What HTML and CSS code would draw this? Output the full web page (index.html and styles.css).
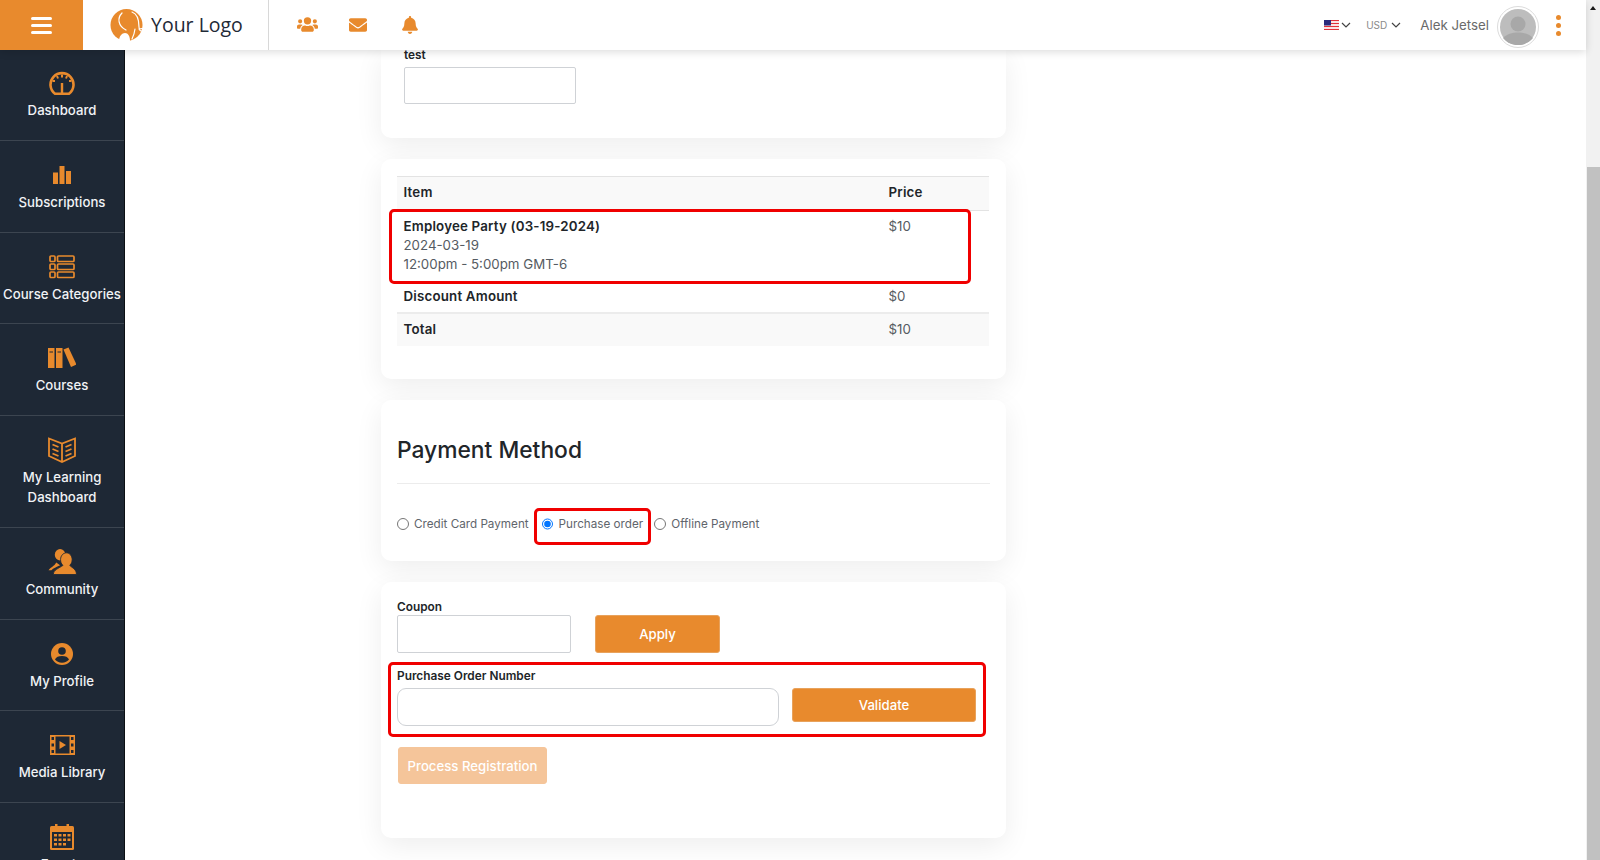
FILE: index.html
```html
<!DOCTYPE html>
<html lang="en">
<head>
<meta charset="utf-8">
<title>Checkout</title>
<link rel="stylesheet" href="styles.css">
</head>
<body>
<div class="app">
  <div class="page">
    <header class="topbar">
      <button class="burger" aria-label="Menu"><span></span><span></span><span></span></button>
      <div class="brand">
        <svg class="brand-mark" viewBox="0 0 36 34" width="36" height="34">
          <circle cx="16.5" cy="17" r="16" fill="#e88a2d"/>
          <path d="M12 5C7 10 8 18 16 22M22 4c6 2 7 9 7 15 0 4 2 5 6 3M25 21c-.5 4-1.500 7-3 10M29 21l6-1" fill="none" stroke="#fff" stroke-width="1.200" stroke-linecap="round"/>
          <path d="M9 33c0-5 3-8 6-8s5 3 5 8z" fill="#fff"/>
        </svg>
        <span class="brand-name">Your Logo</span>
      </div>
      <nav class="quick">
        <svg viewBox="0 0 640 512" width="21" height="17" fill="#e88a2d"><path d="M96 224a64 64 0 1 0 0-128 64 64 0 0 0 0 128zm448 0a64 64 0 1 0 0-128 64 64 0 0 0 0 128zm32 32h-64c-17.600 0-33.500 7.100-45.100 18.600 40.300 22.100 68.900 62 75.100 109.400h66c17.700 0 32-14.300 32-32v-32c0-35.300-28.700-64-64-64zm-256 0a112 112 0 1 0 0-224 112 112 0 0 0 0 224zm76.800 32h-8.300c-20.800 10-43.900 16-68.500 16s-47.600-6-68.500-16h-8.300C179.600 288 128 339.600 128 403.200V432c0 26.500 21.500 48 48 48h288c26.500 0 48-21.500 48-48v-28.800c0-63.600-51.600-115.200-115.200-115.200zm-223.700-13.400C161.500 263.100 145.600 256 128 256H64c-35.300 0-64 28.700-64 64v32c0 17.700 14.300 32 32 32h65.900c6.300-47.400 34.900-87.300 75.200-109.400z"/></svg>
        <svg viewBox="0 0 512 512" width="18" height="18" fill="#e88a2d"><path d="M502.300 190.800c3.900-3.100 9.700-.2 9.700 4.700V400c0 26.500-21.500 48-48 48H48c-26.500 0-48-21.500-48-48V195.600c0-5 5.700-7.800 9.700-4.700 22.400 17.400 52.100 39.500 154.100 113.600 21.100 15.400 56.700 47.800 92.200 47.600 35.700.3 72-32.800 92.300-47.600 102-74.100 131.600-96.300 154-113.700zM256 320c23.200.4 56.600-29.200 73.400-41.400 132.700-96.300 142.800-104.700 173.400-128.700 5.800-4.500 9.200-11.500 9.200-18.900v-19c0-26.500-21.500-48-48-48H48C21.500 64 0 85.500 0 112v19c0 7.400 3.400 14.300 9.200 18.900 30.600 23.900 40.700 32.400 173.400 128.700 16.800 12.200 50.200 41.800 73.400 41.400z"/></svg>
        <svg class="bell" viewBox="0 0 448 512" width="16" height="18" fill="#e88a2d"><path d="M224 512c35.300 0 64-28.700 64-64H160c0 35.300 28.700 64 64 64zm215.400-149.700c-19.300-20.800-55.500-52-55.500-154.300 0-77.700-54.500-139.900-127.900-155.200V32c0-17.700-14.300-32-32-32s-32 14.300-32 32v20.800C118.600 68.100 64.100 130.300 64.100 208c0 102.300-36.200 133.500-55.500 154.300-6 6.400-8.700 14.100-8.600 21.700.1 16.400 13 32 32.100 32h383.800c19.100 0 32-15.600 32.100-32 .1-7.600-2.600-15.300-8.600-21.700z"/></svg>
      </nav>
      <div class="account">
        <span class="pick lang">
          <svg class="flag" viewBox="0 0 15 10" width="15" height="10"><rect width="15" height="10" fill="#fff"/><path d="M0 .5h15M0 3.500h15M0 6.500h15M0 9.500h15" stroke="#e0303a" stroke-width="1"/><path d="M0 2h15M0 5h15M0 8h15" stroke="#f3c6c8" stroke-width="1"/><rect width="7" height="5.500" fill="#2a2a7c"/></svg>
          <svg class="chev" viewBox="0 0 10 6" width="10" height="6"><path d="M1 1l4 4 4-4" fill="none" stroke="#444" stroke-width="1.200"/></svg>
        </span>
        <span class="pick currency">USD
          <svg class="chev" viewBox="0 0 10 6" width="10" height="6"><path d="M1 1l4 4 4-4" fill="none" stroke="#444" stroke-width="1.200"/></svg>
        </span>
        <span class="user-name">Alek Jetsel</span>
        <span class="avatar">
          <svg viewBox="0 0 36 36" width="36" height="36"><circle cx="18" cy="18" r="18" fill="#bdbdbd"/><circle cx="18" cy="15" r="7.500" fill="#a8a8a8"/><path d="M3 29c4-4 9-5.500 15-5.500S29 25 33 29c-3.500 4.500-9 7-15 7S6.500 33.500 3 29z" fill="#a8a8a8"/></svg>
        </span>
        <span class="dots"><i></i><i></i><i></i></span>
      </div>
    </header>

    <div class="workspace">
      <aside class="sidebar">
        <a class="side-item">
          <svg viewBox="0 0 26 24" width="26" height="24" fill="none" stroke="#e88a2d" stroke-width="2.600"><path d="M6 22.700A11.500 11.500 0 1 1 20 22.700z"/><path d="M13 12v10" stroke-width="2.400"/><path d="M13 3.500v3M8 5l1 2.500M18 5l-1 2.500M3.500 10H6M20 10h2.500" stroke-width="2"/></svg>
          <span>Dashboard</span>
        </a>
        <a class="side-item">
          <svg viewBox="0 0 18 18" width="18" height="24" fill="#e88a2d"><rect x="0" y="6.500" width="5" height="11.500"/><rect x="6.500" y="0" width="5" height="18"/><rect x="13" y="5" width="5" height="13"/></svg>
          <span>Subscriptions</span>
        </a>
        <a class="side-item">
          <svg viewBox="0 0 26 24" width="28" height="24" fill="none" stroke="#e88a2d" stroke-width="1.700"><rect x="1" y="1" width="5" height="5.500" rx="1"/><rect x="8.500" y="1" width="16.500" height="5.500" rx="1"/><rect x="1" y="9" width="5" height="5.500" rx="1"/><rect x="8.500" y="9" width="16.500" height="5.500" rx="1"/><rect x="1" y="17" width="5" height="5.500" rx="1"/><rect x="8.500" y="17" width="16.500" height="5.500" rx="1"/></svg>
          <span>Course Categories</span>
        </a>
        <a class="side-item">
          <svg viewBox="0 0 28 20" width="28" height="24" fill="#e88a2d"><rect x="0" y="0" width="6.500" height="20"/><rect x="8" y="0" width="6.500" height="20"/><path d="M15.500 1.500l5-2 8 17-5.500 2.500z"/><path d="M1.500 4h3.500M9.500 4H13" stroke="#1e2835" stroke-width="1"/></svg>
          <span>Courses</span>
        </a>
        <a class="side-item">
          <svg class="tall" viewBox="0 0 28 26" width="28" height="26" fill="none" stroke="#e88a2d" stroke-width="1.800"><path d="M1 1.500l13 5 13-5V19l-13 6-13-6zM14 6.500V25"/><path d="M4.500 7.500l6 2.500M4.500 12l6 2.500M4.500 16.500l6 2.500M23.500 7.500l-6 2.500M23.500 12l-6 2.500M23.500 16.500l-6 2.500"/></svg>
          <span>My Learning<br>Dashboard</span>
        </a>
        <a class="side-item">
          <svg class="tall" viewBox="0 0 29 27" width="29" height="27" fill="#e88a2d"><ellipse cx="12" cy="6" rx="5.500" ry="6"/><path d="M0 22c2-3 6-4 8-8l4 3c-4 2-7 3-9 5z"/><path d="M5 26.500c0-5 6-6.500 10-9.500-2-1.500-2.500-4-2.500-6 0-4 2.700-7 6-7s6 3 6 7c0 2-.5 4.500-2.500 6 3 3 7 4 7 9.500z" stroke="#1e2835" stroke-width=".9"/></svg>
          <span>Community</span>
        </a>
        <a class="side-item">
          <svg viewBox="0 0 22 22" width="22" height="24"><circle cx="11" cy="11" r="11" fill="#e88a2d"/><circle cx="11" cy="8" r="3.800" fill="#1e2835"/><path d="M4 16.500c1-2.500 3.500-3.500 7-3.500s6 1 7 3.500c-1.500 2-4 3.200-7 3.200s-5.500-1.200-7-3.200z" fill="#1e2835"/></svg>
          <span>My Profile</span>
        </a>
        <a class="side-item">
          <svg viewBox="0 0 25 20" width="25" height="24"><rect width="25" height="20" fill="#e88a2d"/><rect x="5.500" y="1.500" width="14" height="17" fill="#1e2835"/><path d="M9.500 6l6.500 4-6.500 4z" fill="#e88a2d"/><path d="M1.500 2h2.500v3H1.500zM1.500 8.500h2.500v3H1.500zM1.500 15h2.500v3H1.500zM21 2h2.500v3H21zM21 8.500h2.500v3H21zM21 15h2.500v3H21z" fill="#1e2835"/></svg>
          <span>Media Library</span>
        </a>
        <a class="side-item">
          <svg class="tall" viewBox="0 0 24 26" width="24" height="26"><rect y="2" width="24" height="24" rx="1.500" fill="#e88a2d"/><rect x="5" y="0" width="2.500" height="4" fill="#e88a2d"/><rect x="16.500" y="0" width="2.500" height="4" fill="#e88a2d"/><rect x="2" y="8" width="20" height="16" fill="#1e2835"/><path d="M4 10h3v2.500H4zM8.500 10h3v2.500h-3zM13 10h3v2.500h-3zM17.500 10h3v2.500h-3zM4 14.500h3V17H4zM8.500 14.500h3V17h-3zM13 14.500h3V17h-3zM17.500 14.500h3V17h-3zM4 19h3v2.500H4zM8.500 19h3v2.500h-3zM13 19h3v2.500h-3z" fill="#e88a2d"/></svg>
          <span>Events</span>
        </a>
      </aside>

      <main class="content">
        <section class="card card-test">
          <label class="field-label">test</label>
          <input class="text-input test-input" type="text">
        </section>

        <section class="card card-order">
          <table class="order">
            <thead>
              <tr><th class="col-item">Item</th><th class="col-price">Price</th></tr>
            </thead>
            <tbody>
              <tr class="row-event">
                <td><strong>Employee Party (03-19-2024)</strong><br>2024-03-19<br>12:00pm - 5:00pm GMT-6</td>
                <td>$10</td>
              </tr>
              <tr class="row-discount"><td><strong>Discount Amount</strong></td><td>$0</td></tr>
              <tr class="row-total"><td><strong>Total</strong></td><td>$10</td></tr>
            </tbody>
          </table>
          <div class="mark mark-event"></div>
        </section>

        <section class="card card-method">
          <h2 class="method-title">Payment Method</h2>
          <div class="method-options">
            <label class="option option-first"><input type="radio" name="pay">Credit Card Payment</label>
            <label class="option"><input type="radio" name="pay" checked>Purchase order</label>
            <label class="option"><input type="radio" name="pay">Offline Payment</label>
          </div>
          <div class="mark mark-radio"></div>
        </section>

        <section class="card card-pay">
          <label class="field-label">Coupon</label>
          <div class="coupon-row">
            <input class="text-input coupon-input" type="text">
            <button class="btn apply">Apply</button>
          </div>
          <label class="field-label po-label">Purchase Order Number</label>
          <div class="po-row">
            <input class="text-input po-input" type="text">
            <button class="btn validate">Validate</button>
          </div>
          <button class="btn process">Process Registration</button>
          <div class="mark mark-po"></div>
        </section>
      </main>
    </div>
  </div>
  <div class="scrollbar">
    <span class="scroll-arrow"></span>
    <span class="scroll-thumb"></span>
  </div>
</div>
</body>
</html>
```

FILE: styles.css
```css
* { box-sizing: border-box; }

html, body {
  margin: 0;
  height: 860px;
  overflow: hidden;
  background: #fff;
  font-family: Inter, "Liberation Sans", sans-serif;
  color: #212529;
}

.app { display: flex; height: 860px; }
.page { flex: 1; min-width: 0; display: flex; flex-direction: column; }

/* Top bar */
.topbar {
  position: relative;
  z-index: 2;
  flex: none;
  height: 50px;
  display: flex;
  align-items: stretch;
  background: #fff;
  box-shadow: 0 2px 8px rgba(0, 0, 0, .14);
}
.burger {
  flex: none;
  width: 83px;
  border: 0;
  padding: 0;
  background: #e88a2d;
  display: flex;
  flex-direction: column;
  align-items: center;
  justify-content: center;
  gap: 4px;
}
.burger span { width: 21px; height: 3px; border-radius: 2px; background: #fff; }
.brand {
  flex: none;
  width: 186px;
  padding-left: 27px;
  display: flex;
  align-items: center;
  gap: 5px;
  border-right: 1px solid #d8d8d8;
}
.brand-mark { flex: none; margin-top: -1px; }
.brand-name { font-family: "Open Sans", sans-serif; font-size: 19.500px; color: #1f2a37; margin-top: -2px; }
.quick {
  display: flex;
  align-items: center;
  gap: 31px;
  padding: 0 0 1px 28px;
}
.bell { margin-left: 4px; }
.account {
  margin-left: auto;
  display: flex;
  align-items: center;
  padding-right: 25px;
}
.pick { display: flex; align-items: center; gap: 4px; }
.lang { gap: 2px; }
.flag { display: block; }
.chev { display: block; }
.currency { font-size: 10px; color: #8a8a8a; margin-left: 15px; }
.user-name { font-size: 13.300px; color: #6a6a6a; margin-left: 19px; }
.avatar {
  width: 42px;
  height: 42px;
  margin: 4px 0 0 8px;
  border: 1px solid #dcdcdc;
  border-radius: 50%;
  display: flex;
  align-items: center;
  justify-content: center;
}
.avatar svg { display: block; }
.dots { display: flex; flex-direction: column; gap: 3px; margin-left: 17px; }
.dots i { width: 5px; height: 5px; border-radius: 50%; background: #e88a2d; }

/* Sidebar */
.workspace { flex: 1; min-height: 0; display: flex; }
.sidebar {
  flex: none;
  width: 125px;
  margin-top: -1px;
  background: #1e2835;
  border-right: 1px solid #0b0f14;
  overflow: hidden;
}
.side-item {
  display: flex;
  flex-direction: column;
  align-items: center;
  padding: 22px 0 19.750px;
  border-bottom: 1px solid #3c4550;
  color: #f1f3f5;
  font-size: 13.200px;
  font-weight: 500;
  line-height: 20px;
  text-align: center;
  white-space: nowrap;
}
.side-item svg { display: block; flex: none; height: 24px; margin-bottom: 5px; }
.side-item svg.tall { height: 26px; margin: -1px 0 4px; }

/* Main column */
.content {
  flex: 1;
  min-width: 0;
  padding-left: 256px;
  display: flex;
  flex-direction: column;
  gap: 21px;
  align-items: flex-start;
}
.card {
  position: relative;
  flex: none;
  width: 625px;
  background: #fff;
  border-radius: 10px;
  box-shadow: 0 8px 28px rgba(0, 0, 0, .07);
  padding: 0 16px;
}
.card-test {
  height: 88px;
  border-radius: 0 0 10px 10px;
  padding: 0 23px;
}
.card-order { height: 220px; padding-top: 17px; }
.card-method { height: 161px; }
.card-pay { height: 256px; padding-top: 17px; }

.field-label {
  display: block;
  font-size: 11.850px;
  font-weight: 600;
  line-height: 16px;
  color: #212529;
}
.card-test .field-label { margin-top: -3px; }
.text-input {
  display: block;
  height: 38px;
  border: 1px solid #cfd2d6;
  border-radius: 2px;
  background: #fff;
  padding: 0 10px;
}
.test-input { width: 172px; margin-top: 4px; height: 37px; }

/* Order table */
.order {
  width: 592px;
  border-collapse: collapse;
  table-layout: fixed;
  font-size: 13.300px;
  line-height: 19px;
  color: #555b62;
}
.order th {
  height: 34px;
  padding: 0 6.500px 2px;
  text-align: left;
  font-weight: 600;
  letter-spacing: .2px;
  color: #212529;
  background: #f9f9f9;
  border-top: 1px solid #e3e3e3;
  border-bottom: 1px solid #e3e3e3;
}
.col-price { width: 107px; }
.order td { padding: 6px 6.500px 4px; vertical-align: top; }
.order strong { font-weight: 600; letter-spacing: .2px; color: #212529; }
.row-event td { height: 70px; }
.row-discount td { height: 32px; border-bottom: 2px solid #ececec; }
.row-total td { height: 33px; background: #f9f9f9; }

/* Payment method */
.method-title {
  margin: 0;
  padding: 35px 0 15px;
  height: 84px;
  font-size: 22.800px;
  line-height: 30px;
  font-weight: 500;
  color: #212529;
  border-bottom: 1px solid #ececec;
}
.method-options { display: flex; gap: 11px; padding-top: 32px; }
.option {
  display: flex;
  align-items: center;
  gap: 5.500px;
  font-size: 11.700px;
  line-height: 16px;
  color: #5f656c;
}
.option-first { margin-right: 2px; }
.option input { margin: 0; width: 11.500px; height: 11.500px; flex: none; }

/* Buttons */
.btn {
  border: 1px solid #e8a25c;
  border-radius: 3px;
  background: #e88a2d;
  color: #fff;
  font-family: inherit;
  font-size: 13.200px;
  font-weight: 500;
  padding: 0;
}
.coupon-row { display: flex; gap: 24px; }
.coupon-input { width: 174px; }
.apply { width: 125px; height: 38px; }
.po-label { margin-top: 15px; }
.po-row { display: flex; align-items: flex-start; gap: 13px; margin-top: 4px; }
.po-input { width: 382px; border-radius: 9px; }
.validate { width: 184px; height: 34px; }
.process {
  display: block;
  width: 149px;
  height: 37px;
  margin: 21px 0 0 1px;
  background: #f5c59a;
  border-color: #f5c59a;
}

/* Red annotation frames */
.mark {
  position: absolute;
  border: 3px solid #f00000;
  border-radius: 5px;
  pointer-events: none;
}
.mark-event { left: 8px; top: 50px; width: 582px; height: 75px; }
.mark-radio { left: 153px; top: 108px; width: 117px; height: 37px; }
.mark-po { left: 7px; top: 80px; width: 598px; height: 75px; }

/* Scrollbar */
.scrollbar {
  position: relative;
  flex: none;
  width: 14px;
  background: #f1f1f1;
}
.scroll-arrow {
  position: absolute;
  left: 4px;
  top: 6px;
  border-left: 3px solid transparent;
  border-right: 3px solid transparent;
  border-bottom: 4px solid #1a1a1a;
}
.scroll-thumb {
  position: absolute;
  left: 1px;
  right: 0;
  top: 167px;
  bottom: 0;
  background: #c1c1c1;
}
```
